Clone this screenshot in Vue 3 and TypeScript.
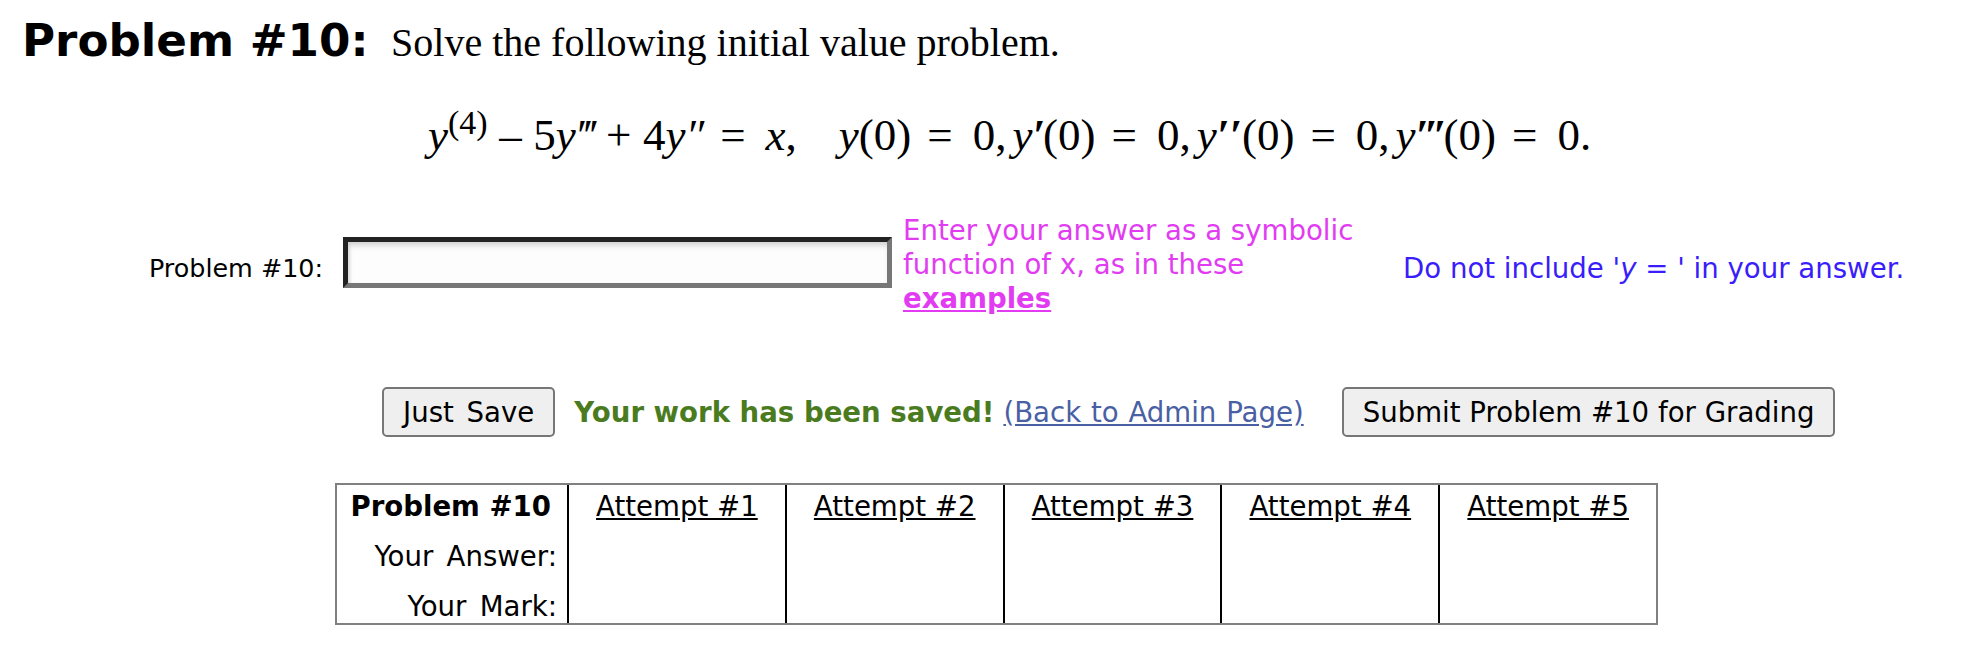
<script setup lang="ts">
const attempts: string[] = ['Attempt #1', 'Attempt #2', 'Attempt #3', 'Attempt #4', 'Attempt #5']
</script>

<template>
  <main class="page">
    <header class="title-row">
      <h1 class="title">Problem #10:</h1>
      <p class="statement">Solve the following initial value problem.</p>
    </header>

    <div class="math">
      <i>y</i><sup>(4)</sup><span class="op">–</span>5<i>y</i><span class="pr thin">‴</span><span class="op">+</span>4<i>y</i><span class="pr thin">″</span><span class="eq">=</span><i>x</i>,<span class="quad"></span><i>y</i>(0)<span class="eq">=</span>0,<i class="after">y</i><span class="pr p1">′</span>(0)<span class="eq">=</span>0,<i class="after">y</i><span class="pr p2">′′</span>(0)<span class="eq">=</span>0,<i class="after">y</i><span class="pr p3">′′′</span>(0)<span class="eq">=</span>0.
    </div>

    <div class="answer-row">
      <label class="answer-label" for="answer">Problem #10:</label>
      <input id="answer" class="answer-input" type="text" />
      <p class="hint">Enter your answer as a symbolic function of x, as in these <a class="hint-link" href="#">examples</a></p>
      <p class="note">Do not include '<i>y</i> = ' in your answer.</p>
    </div>

    <div class="actions">
      <button class="btn save" type="button">Just Save</button>
      <strong class="saved">Your work has been saved!</strong>
      <a class="back" href="#">(Back to Admin Page)</a>
      <button class="btn submit" type="button">Submit Problem #10 for Grading</button>
    </div>

    <table class="attempts">
      <tbody>
        <tr>
          <th class="head">Problem #10</th>
          <td v-for="a in attempts" :key="a" class="cell"><a class="attempt-link" href="#">{{ a }}</a></td>
        </tr>
        <tr>
          <th class="side">Your Answer:</th>
          <td v-for="a in attempts" :key="a" class="cell"></td>
        </tr>
        <tr class="last">
          <th class="side">Your Mark:</th>
          <td v-for="a in attempts" :key="a" class="cell"></td>
        </tr>
      </tbody>
    </table>
  </main>
</template>

<style scoped>
.page {
  width: 1980px;
  height: 660px;
  overflow: hidden;
  background: #fff;
  color: #000;
  font-family: "DejaVu Sans", sans-serif;
  font-size: 27.6px;
  box-sizing: border-box;
  padding-top: 14px;
}
.title-row {
  display: flex;
  align-items: baseline;
  padding-left: 22px;
  height: 54px;
}
.title {
  margin: 0;
  font-size: 45.2px;
  font-weight: 700;
  line-height: 54px;
  white-space: nowrap;
}
.statement {
  margin: 0 0 0 22.5px;
  font-family: "Liberation Serif", serif;
  font-size: 40px;
  white-space: nowrap;
}
.math {
  margin-top: 37px;
  padding-left: 428px;
  height: 60px;
  font-family: "Liberation Serif", serif;
  font-size: 45px;
  line-height: 60px;
  white-space: nowrap;
}
.math sup {
  font-size: 34px;
  line-height: 0;
}
.op { margin: 0 11.5px; }
.eq { margin: 0 20px 0 16px; }
.quad { display: inline-block; width: 42px; }
.pr { font-style: italic; font-weight: 700; }
.pr.thin { font-weight: 400; }
.p1 { margin-right: -2px; }
.p3 { letter-spacing: -4px; margin-right: 2px; }
.after { margin-left: 6px; }
.answer-row {
  display: flex;
  align-items: center;
  margin-top: 46px;
  padding-left: 149px;
  height: 102px;
}
.answer-label {
  width: 194px;
  flex: none;
  padding-top: 12px;
  font-size: 25.4px;
  white-space: nowrap;
}
.answer-input {
  flex: none;
  box-sizing: border-box;
  width: 549px;
  height: 51px;
  border: 5px solid;
  border-color: #222 #777 #777 #222;
  background: #fdfdfd;
  box-shadow: inset 0 6px 6px -3px #ccc, inset 4px 0 4px -3px #ccc;
  outline: none;
}
.hint {
  flex: none;
  width: 480px;
  margin: 0 0 0 11px;
  padding-top: 5px;
  color: #e23cf2;
  line-height: 34px;
}
.hint-link { color: inherit; font-weight: 700; display: block; }
.note {
  margin: 0 0 0 20px;
  padding-top: 12px;
  color: #3a1dfb;
  white-space: nowrap;
}
.actions {
  display: flex;
  align-items: center;
  margin-top: 74px;
  padding-left: 382px;
  height: 50px;
}
.btn {
  box-sizing: border-box;
  height: 50px;
  padding: 0 19px;
  border: 2px solid #777;
  border-radius: 5px;
  background: #efefef;
  color: #000;
  font: inherit;
  white-space: nowrap;
}
.save { word-spacing: 4px; }
.saved {
  margin-left: 19px;
  color: #4a7c1f;
  white-space: nowrap;
}
.back {
  margin-left: 9px;
  color: #4a60a4;
  word-spacing: 1px;
  white-space: nowrap;
}
.submit { margin-left: 38px; }
.attempts {
  margin: 46px 0 0 335px;
  border-collapse: separate;
  border-spacing: 0;
  table-layout: fixed;
  width: 1323px;
  border: 2px solid #808080;
  box-sizing: border-box;
  line-height: 28px;
}
.attempts th {
  box-sizing: border-box;
  width: 232px;
  height: 50px;
  padding: 8px 10px 0 0;
  vertical-align: top;
  text-align: right;
  border-right: 2px solid #000;
  white-space: nowrap;
}
.attempts .side { font-weight: 400; word-spacing: 4.5px; }
.attempts .head { padding-right: 16px; }
.cell {
  box-sizing: border-box;
  width: 217.8px;
  height: 50px;
  padding: 8px 0 0;
  vertical-align: top;
  text-align: center;
  border-right: 2px solid #000;
}
.cell:last-child { border-right: none; width: 216px; }
.last th, .last .cell { height: 38px; }
.attempt-link { color: #000; }
</style>
